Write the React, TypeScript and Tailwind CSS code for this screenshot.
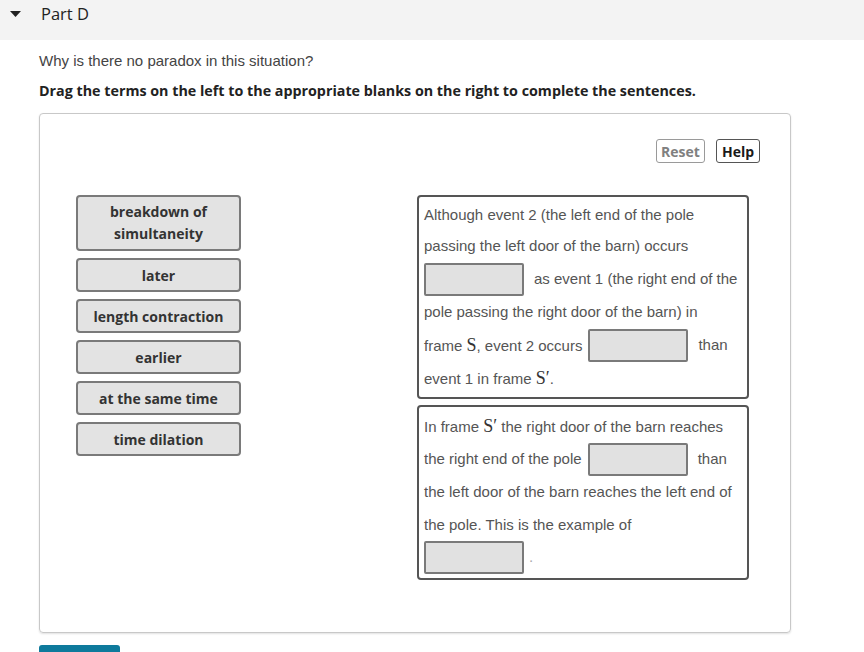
import React from "react";

const arial = { fontFamily: '"Liberation Sans", Arial, sans-serif' };

function Blank() {
  return <span className="inline-block w-[100px] h-[33px] border-2 border-[#7a7a7a] bg-[#e1e1e1] rounded-[2px] shrink-0" />;
}

function S({ prime }: { prime?: boolean }) {
  return (
    <span className="text-[18px] text-[#333]" style={{ fontFamily: '"Liberation Serif", "Times New Roman", serif' }}>
      S{prime ? "′" : ""}
    </span>
  );
}

const terms = ["later", "length contraction", "earlier", "at the same time", "time dilation"];

export default function App() {
  return (
    <div className="w-[864px] h-[652px] bg-white overflow-hidden text-[#333]" style={{ fontFamily: '"Open Sans", sans-serif' }}>
      <div className="h-[40px] bg-[#f3f3f3] flex items-start pt-[4px]">
        <div className="h-[20px] flex items-center">
          <svg className="ml-[10px]" width="11" height="6" viewBox="0 0 11 6">
            <polygon points="0,0 11,0 5.5,6" fill="#222" />
          </svg>
          <span className="ml-[20px] text-[16.5px] leading-[20px] font-medium text-[#222]">Part D</span>
        </div>
      </div>
      <div className="pl-[39px]">
        <p className="mt-[12px] leading-[18px] text-[15px] text-[#444]" style={arial}>
          Why is there no paradox in this situation?
        </p>
        <p className="mt-[12px] leading-[18px] text-[14.3px] font-bold text-[#222]">
          Drag the terms on the left to the appropriate blanks on the right to complete the sentences.
        </p>
        <div className="mt-[13px] w-[752px] h-[520px] border border-[#c8c8c8] rounded-[4px] shadow-[0_1px_2px_rgba(0,0,0,0.12)]">
          <div className="pt-[25px] pr-[30px] flex justify-end gap-[11px]">
            <button className="h-[24px] w-[49px] border border-[#9a9a9a] rounded-[3px] text-[14px] font-bold text-[#808080] flex items-center justify-center">
              Reset
            </button>
            <button className="h-[24px] w-[44px] border border-[#555] rounded-[3px] text-[14px] font-bold text-[#1a1a1a] flex items-center justify-center">
              Help
            </button>
          </div>
          <div className="mt-[32px] pl-[36px] flex items-start">
            <div className="w-[165px] flex flex-col gap-[7px]">
              <div className="h-[56px] border-2 border-[#7a7a7a] bg-[#e3e3e3] rounded-[4px] flex items-center justify-center text-center text-[14px] font-bold leading-[22px] text-[#333]">
                breakdown of
                <br />
                simultaneity
              </div>
              {terms.map((t) => (
                <div
                  key={t}
                  className="h-[34px] border-2 border-[#7a7a7a] bg-[#e3e3e3] rounded-[4px] flex items-center justify-center text-[14px] font-bold text-[#333]"
                >
                  {t}
                </div>
              ))}
            </div>
            <div className="ml-[176px] w-[332px] flex flex-col gap-[6px] text-[15px] text-[#555]" style={arial}>
              <div className="h-[204px] border-2 border-[#555] rounded-[4px] pt-[3px] px-[5px]">
                <div className="h-[30px] flex items-center">Although event 2 (the left end of the pole</div>
                <div className="h-[33px] flex items-center">passing the left door of the barn) occurs</div>
                <div className="h-[33px] flex items-center gap-[10px]">
                  <Blank />
                  <span>as event 1 (the right end of the</span>
                </div>
                <div className="h-[33px] flex items-center">pole passing the right door of the barn) in</div>
                <div className="h-[33px] flex items-center">
                  <span>
                    frame <S />, event 2 occurs
                  </span>
                  <span className="ml-[6px] flex">
                    <Blank />
                  </span>
                  <span className="ml-[10px]">than</span>
                </div>
                <div className="h-[33px] flex items-center">
                  <span>
                    event 1 in frame <S prime />.
                  </span>
                </div>
              </div>
              <div className="h-[175px] border-2 border-[#555] rounded-[4px] pt-[3px] px-[5px]">
                <div className="h-[33px] flex items-center">
                  <span>
                    In frame <S prime /> the right door of the barn reaches
                  </span>
                </div>
                <div className="h-[33px] flex items-center">
                  <span>the right end of the pole</span>
                  <span className="ml-[6px] flex">
                    <Blank />
                  </span>
                  <span className="ml-[10px]">than</span>
                </div>
                <div className="h-[33px] flex items-center">the left door of the barn reaches the left end of</div>
                <div className="h-[32px] flex items-center">the pole. This is the example of</div>
                <div className="h-[33px] flex items-center">
                  <Blank />
                  <span className="ml-[5px] text-[#aaa]">.</span>
                </div>
              </div>
            </div>
          </div>
        </div>
        <div className="mt-[12px] w-[81px] h-[20px] bg-[#0e7a9c] rounded-t-[3px]" />
      </div>
    </div>
  );
}
